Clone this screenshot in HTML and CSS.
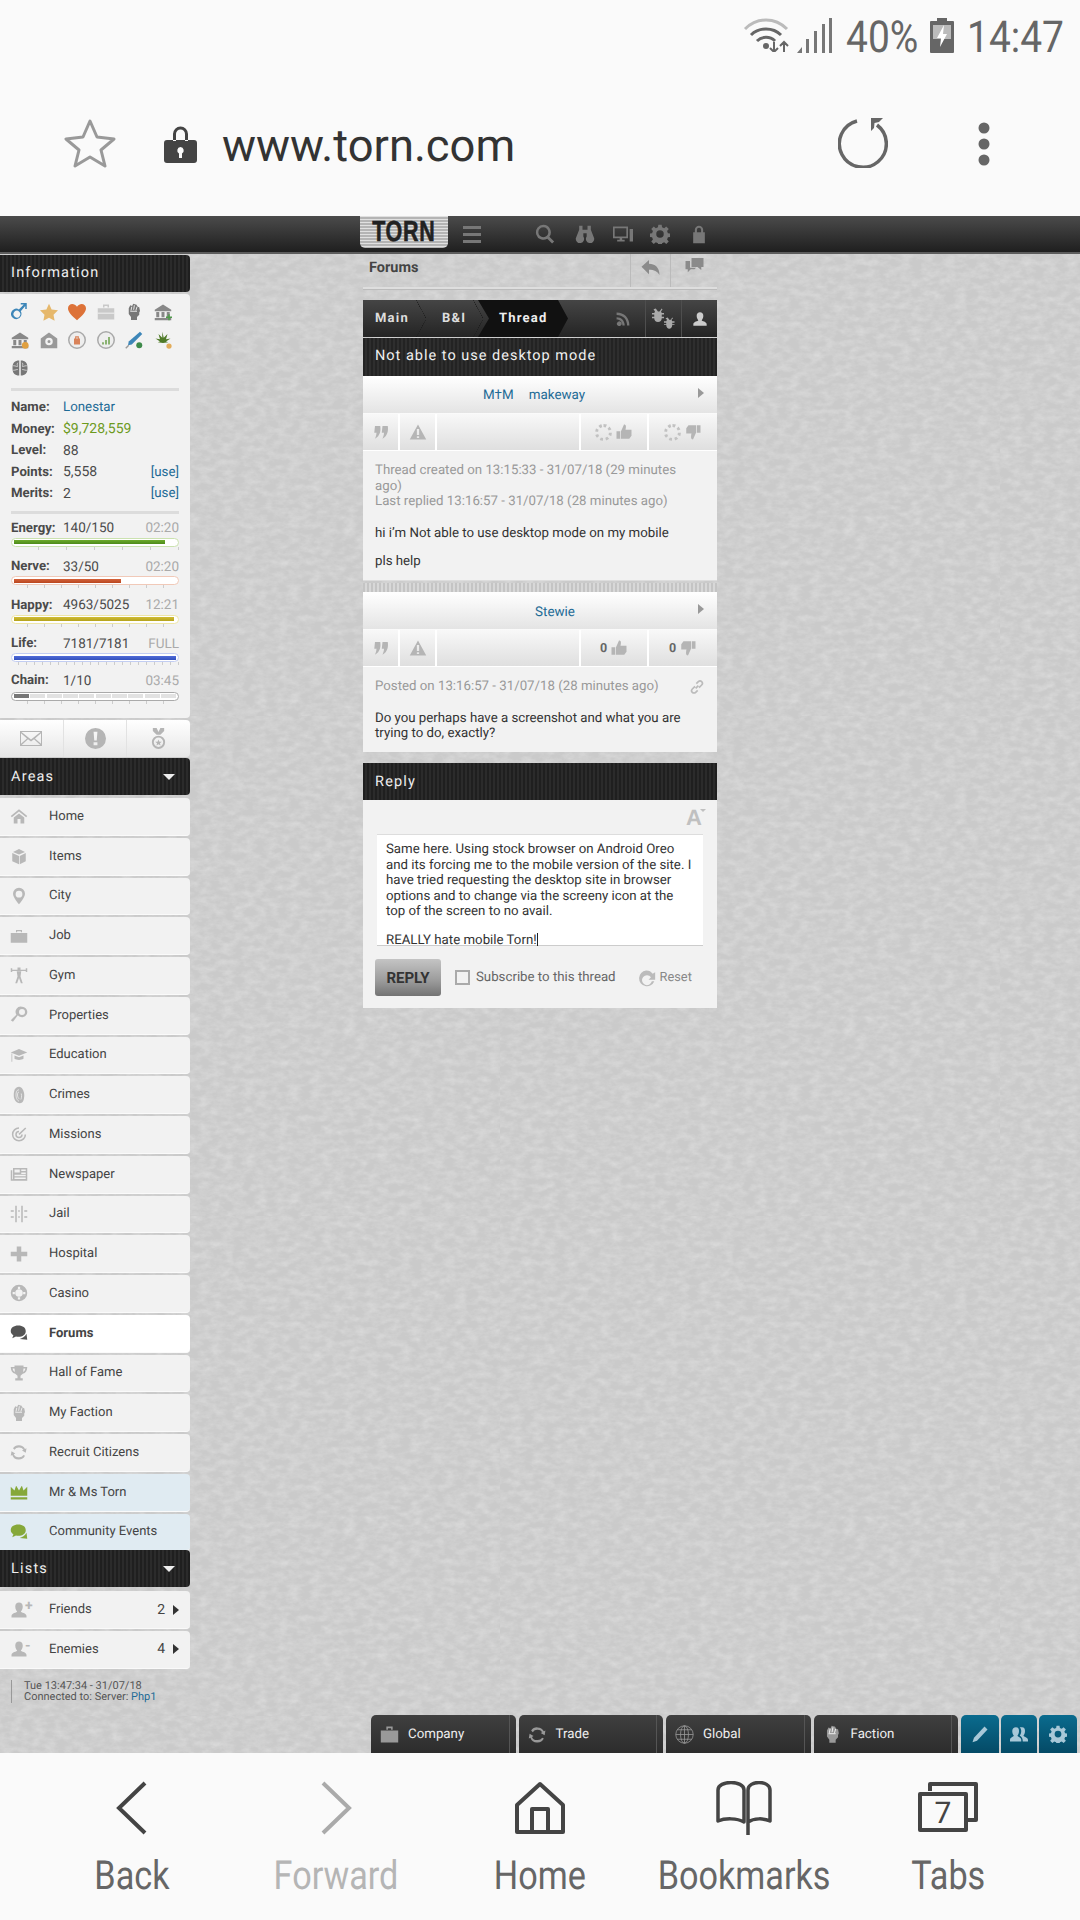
FILE: index.html
```html
<!DOCTYPE html>
<html lang="en">
  <head>
    <meta charset="UTF-8" />
    <title>TORN - Forums</title>
    <link rel="stylesheet" href="styles.css">
  </head>
  <body>
    <!-- shared icons -->
    <svg class="sprite" xmlns="http://www.w3.org/2000/svg">
      <symbol id="i-home" viewBox="0 0 24 24"><path d="M12 3 1 12l1.500 1.500L12 6l9.500 7.500L23 12zM5 14l7-5.500 7 5.500v8h-5v-6h-4v6H5z"/></symbol>
      <symbol id="i-box" viewBox="0 0 24 24"><path d="M12 12 3 8v11l9 4zM13 12v11l8-4V8zM12 10l8-3.500-8-4-8 4z"/></symbol>
      <symbol id="i-pin" viewBox="0 0 24 24"><path fill-rule="evenodd" d="M12 1a8 8 0 0 0-8 8c0 5 8 14 8 14s8-9 8-14a8 8 0 0 0-8-8zm0 4a4.500 4.500 0 1 1 0 9 4.500 4.500 0 0 1 0-9z"/></symbol>
      <symbol id="i-job" viewBox="0 0 24 24"><path d="M1 8h22v13H1zM8 7V4h8v3h-1.500V5.500h-5V7z"/></symbol>
      <symbol id="i-gym" viewBox="0 0 24 24"><path d="M1 3h2v5H1zM21 3h2v5h-2zM3 5h18v1.500H3zM10 2h4v3h-4zM9 7h6l-1 7 3 9h-2.500L12 16l-2.500 7H7l3-9z"/></symbol>
      <symbol id="i-key" viewBox="0 0 24 24"><path fill-rule="evenodd" d="M16 1a7 7 0 1 1-5.500 11.300L4 21l-3-2 7.500-7.500A7 7 0 0 1 16 1zm0 3a4 4 0 1 0 0 8 4 4 0 0 0 0-8z"/></symbol>
      <symbol id="i-edu" viewBox="0 0 24 24"><path d="M12 4 1 8.500 12 13l11-4.500zM6 12.500V17c3 2 9 2 12 0v-4.500l-6 2.500zM2 10h1v11H2z"/></symbol>
      <symbol id="i-crimes" viewBox="0 0 24 24"><path d="M12 1C7 1 5 6 5 12s3 11 8 11 6-6 6-11-3-11-7-11z"/><path fill="none" stroke="#f2f2f2" d="M12 5c-3 0-4 3-4 7s2 8 4 8M12 8c-1.500 0-2 2-2 4s1 5 2.500 5M15 10c1 4 0 7-.500 8"/></symbol>
      <symbol id="i-target" viewBox="0 0 24 24"><path fill="none" stroke="currentColor" stroke-width="2" d="M12 4a8.500 8.500 0 1 0 8.500 8.500M12 8.500a4 4 0 1 0 4 4M12 12.500 21 4"/></symbol>
      <symbol id="i-news" viewBox="0 0 24 24"><path fill-rule="evenodd" d="M4 4h19v17H1V7h2v12h1zm2 2v4h7V6zm9 0v2h6V6zm0 4v2h6v-2zM6 13v2h15v-2zm0 3.500v2h15v-2z"/></symbol>
      <symbol id="i-jail" viewBox="0 0 24 24"><path d="M7 1h2v22H7zM15 1h2v22h-2zM1 7h4v2H1zM11 7h2v2h-2zM19 7h4v2h-4zM1 15h4v2H1zM11 15h2v2h-2zM19 15h4v2h-4z"/></symbol>
      <symbol id="i-plus" viewBox="0 0 24 24"><path d="M9 2h6v7h8v6h-8v7H9v-7H1V9h8z"/></symbol>
      <symbol id="i-chip" viewBox="0 0 24 24"><path fill-rule="evenodd" d="M12 1a11 11 0 1 1 0 22 11 11 0 0 1 0-22zm0 6a5 5 0 1 0 0 10 5 5 0 0 0 0-10zM10.500 3.500v3h3v-3zm0 14v3h3v-3zm-7-7v3h3v-3zm14 0v3h3v-3z"/></symbol>
      <symbol id="i-chat" viewBox="0 0 24 24"><path d="M11 2c6 0 10 3 10 7.500S17 17 11 17c-1 0-2 0-3-.300L3 19l1.500-4C2.500 13.500 1 12 1 9.500 1 5 5 2 11 2zM22 13l1 8-10-1c3-1 7-3 9-7z"/></symbol>
      <symbol id="i-trophy" viewBox="0 0 24 24"><path d="M6 2h12v2h5c0 5-2 8-6 9-1 1-2 2-3 2.500V19h3v3H7v-3h3v-3.500C9 15 8 14 7 13c-4-1-6-4-6-9h5zM3.500 6c.300 2 1 3.500 3 4.500L6 6zM20.500 6H18l-.500 4.500c2-1 2.700-2.500 3-4.500z"/></symbol>
      <symbol id="i-fist" viewBox="0 0 24 24"><path d="M5 7l2-4 2.500 1L11 1l3 1 1 0 2 3 2 .500 1 5-1 2 0 3-3 3v4H8v-4l-3-4z"/><path fill="none" stroke="#f2f2f2" stroke-width="1.200" d="M9 5l-1 5M12.500 3l-1 6M16 5l-1.500 5M7 11l9 0"/></symbol>
      <symbol id="i-cycle" viewBox="0 0 24 24"><path d="M12 3a9 9 0 0 1 8 5l2-1-1 6-5-3 2-1a7 7 0 0 0-6-3 7 7 0 0 0-6 3L4 7a9 9 0 0 1 8-4zM2 11l5 3-2 1a7 7 0 0 0 7 4 7 7 0 0 0 6-3l2 1a9 9 0 0 1-8 5 9 9 0 0 1-9-6l-2 1z"/></symbol>
      <symbol id="i-crown" viewBox="0 0 24 24"><path d="M1 5l5 5 2-6h.500l3.500 6 3.500-6h.500l2 6 5-5v12H1zM1 19h22v3H1z"/></symbol>
      <symbol id="i-person" viewBox="0 0 24 24"><path d="M12 2c3 0 5 2 5 5.500S15 13 14.500 14c0 1.500 7.500 2 7.500 6v2H2v-2c0-4 7.500-4.500 7.500-6C9 13 7 11 7 7.500S9 2 12 2z"/></symbol>
      <symbol id="i-quote" viewBox="0 0 24 24"><path d="M4 4h7c1 6 0 13-7 17 1-3 2-5 2-8H3zM14 4h7c1 6 0 13-7 17 1-3 2-5 2-8h-3z"/></symbol>
      <symbol id="i-warn" viewBox="0 0 24 24"><path fill-rule="evenodd" d="M12 2l11 20H1zm-1.500 6v8h3V8zm0 9.500v2.500h3v-2.500z"/></symbol>
      <symbol id="i-up" viewBox="0 0 24 24"><path d="M2 11h5v10H2zM8 11l4-9c3 0 3 3 2 7h8v8l-3 4H8z"/></symbol>
      <symbol id="i-down" viewBox="0 0 24 24"><path d="M17 3h5v10h-5zM16 3H6L3 7v7h7c-1 4-1 8 2 8l4-9z"/></symbol>
      <symbol id="i-gear" viewBox="0 0 24 24"><path fill-rule="evenodd" d="M10 1h4l.500 3 2.500 1 2.500-2 3 3-2 2.500 1 2.500 3 .500v4l-3 .500-1 2.500 2 2.500-3 3-2.500-2-2.500 1-.500 3h-4l-.500-3-2.500-1-2.500 2-3-3 2-2.500-1-2.500-3-.500v-4l3-.500 1-2.500-2-2.500 3-3 2.500 2 2.500-1zm2 6.500a4.500 4.500 0 1 0 0 9 4.500 4.500 0 0 0 0-9z"/></symbol>
      <symbol id="i-padlock" viewBox="0 0 24 24"><path d="M7 10V7a5 5 0 0 1 10 0v3h2v13H5V10zm2.500 0h5V7a2.500 2.500 0 0 0-5 0z"/></symbol>
    </svg>

    <div class="status">
      <svg class="st-wifi" viewBox="0 0 48 34"><path d="M3 11C15-1 33-1 45 11" fill="none" stroke="#bbb" stroke-width="3"/><path d="M9 17c8-8 22-8 30 0M15 23c5-5 13-5 18 0" fill="none" stroke="#666" stroke-width="3"/><circle cx="24" cy="28" r="3" fill="#666"/><path d="M32 24v10M28 30l4 4 4-4M42 34V24M38 28l4-4 4 4" fill="none" stroke="#666" stroke-width="2"/></svg>
      <svg class="st-signal" viewBox="0 0 35 35"><path d="M0 35l5-6v6zM9 35V21h3v14zM17 35V13h3v22zM25 35V6h3v29zM32 35V0h3v35z" fill="#777"/></svg>
      <span class="st-pct">40%</span>
      <svg class="st-batt" viewBox="0 0 24 35"><path fill-rule="evenodd" d="M7 0h10v3h6a1 1 0 0 1 1 1v30a1 1 0 0 1-1 1H1a1 1 0 0 1-1-1V4a1 1 0 0 1 1-1h6z" fill="#666"/><path d="M3 7h18v14H3z" fill="#bbb"/><path d="M14 7 7 20h4l-1 9 7-13h-4z" fill="#fff"/></svg>
      <span class="st-time">14:47</span>
    </div>

    <div class="urlbar">
      <svg class="url-star" viewBox="0 0 52 50"><path d="M26 3l7 16 17 2-13 11 4 16-15-9-15 9 4-16L2 21l17-2z" fill="none" stroke="#999" stroke-width="3" stroke-linejoin="round"/></svg>
      <svg class="url-lock" viewBox="0 0 33 38"><path fill-rule="evenodd" d="M9 16V9a7.500 7.500 0 0 1 15 0v7h-3V9a4.500 4.500 0 0 0-9 0v7zM3 15h27a3 3 0 0 1 3 3v17a3 3 0 0 1-3 3H3a3 3 0 0 1-3-3V18a3 3 0 0 1 3-3zm13.500 7a3.500 3.500 0 0 0-1.500 6.500V33h3v-4.500A3.500 3.500 0 0 0 16.500 22z" fill="#444"/></svg>
      <span class="url-text">www.torn.com</span>
      <svg class="url-reload" viewBox="0 0 50 50"><path d="M19 3A23.500 23.500 0 1 0 39 7" fill="none" stroke="#666" stroke-width="3.500"/><path d="M33 0h12l-4 4-4.500 1-.500 5-3 3z" fill="#666"/></svg>
      <svg class="url-menu" viewBox="0 0 12 44"><circle cx="6" cy="6" r="5.500"/><circle cx="6" cy="22" r="5.500"/><circle cx="6" cy="38" r="5.500"/></svg>
    </div>

    <div class="page">
      <header class="topbar">
        <div class="logo"><span>TORN</span></div>
        <svg class="top-burger" viewBox="0 0 18 17"><path d="M0 0h18v3H0zM0 7h18v3H0zM0 14h18v3H0z"/></svg>
        <svg class="top-icon top-search" viewBox="0 0 24 24"><path fill-rule="evenodd" d="M10 1a9 9 0 0 1 7.200 14.400L23 21l-2.500 2.500-5.700-5.800A9 9 0 1 1 10 1zm0 3a6 6 0 1 0 0 12 6 6 0 0 0 0-12z"/></svg>
        <svg class="top-icon top-bino" viewBox="0 0 24 24"><path d="M5 2h4v5h6V2h4v5l4 10a5 5 0 1 1-9-2V11h-4v4a5 5 0 1 1-9 2L5 7z"/></svg>
        <svg class="top-icon top-mon" viewBox="0 0 24 24"><path fill-rule="evenodd" d="M0 3h18v14h-7v2h3v2H5v-2h3v-2H0zm2 2v10h14V5zM20 6h4v15h-4z"/></svg>
        <svg class="top-icon top-gear"><use href="#i-gear"/></svg>
        <svg class="top-icon top-lock"><use href="#i-padlock"/></svg>
      </header>

      <div class="layout">
        <aside class="sidebar">
          <h2 class="bar-title bar-info">Information</h2>
          <section class="info">
            <div class="status-icons">
              <svg class="si" viewBox="0 0 24 24"><path d="M13 11a7 7 0 1 1-2.500-2.500L17 2h-4V0h8v8h-2V4l-6 7zm-2 .500a4.500 4.500 0 1 0 .500 6 4.500 4.500 0 0 0-.500-6z" fill="#3d86b8"/></svg>
              <svg class="si" viewBox="0 0 24 24"><path d="M12 1l3.500 7.500L24 9.500l-6 6 1.500 8L12 19.500 4.500 23.500l1.500-8-6-6 8.500-1z" fill="#e6b86c"/></svg>
              <svg class="si" viewBox="0 0 24 24"><path d="M12 23C5 17 0 12 0 7c0-6 8-8 12-2 4-6 12-4 12 2 0 5-5 10-12 16z" fill="#dd7238"/></svg>
              <svg class="si" viewBox="0 0 24 24"><path d="M1 7h22v15H1zM8 6V2h8v4h-2V4h-4v2z" fill="#c9c9c9"/><path d="M1 13h22v1H1z" fill="#fff"/></svg>
              <svg class="si si-dark"><use href="#i-fist"/></svg>
              <svg class="si" viewBox="0 0 24 24"><path d="M12 2 1 9v2h22V9zM3 12h4v7H3zM10 12h4v7h-4zM17 12h4v7h-4zM1 20h22v3H1z" fill="#888"/><path d="M19 15h2v3h3v2h-3v3h-2v-3h-3v-2h3z" fill="#4f9a4a"/></svg>
              <svg class="si" viewBox="0 0 24 24"><path d="M12 2 1 9v2h22V9zM3 12h4v7H3zM10 12h4v7h-4zM17 12h4v7h-4zM1 20h22v3H1z" fill="#888"/><circle cx="19" cy="19" r="4.500" fill="#e0a040"/></svg>
              <svg class="si" viewBox="0 0 24 24"><path fill-rule="evenodd" d="M12 2 1 10v13h22V10zm0 7a5 5 0 1 1 0 10 5 5 0 0 1 0-10zm0 3a2 2 0 1 0 0 4 2 2 0 0 0 0-4z" fill="#999"/></svg>
              <svg class="si" viewBox="0 0 24 24"><circle cx="12" cy="12" r="11" fill="#eee" stroke="#aaa" stroke-width="2"/><path d="M8 10h8v8H8zM9.500 10V7h5v3h-1.500V8.500h-2V10z" fill="#d9835a"/></svg>
              <svg class="si" viewBox="0 0 24 24"><circle cx="12" cy="12" r="11" fill="#eee" stroke="#aaa" stroke-width="2"/><path d="M7 15h2v3H7zM11 12h2v6h-2zM15 8h2v10h-2z" fill="#6aa04a"/></svg>
              <svg class="si" viewBox="0 0 24 24"><path d="M20 1l3 3-14 14-5 1 1-5z" fill="#3d86b8"/><path d="M1 23l4-4" stroke="#999" stroke-width="2"/><circle cx="19" cy="19" r="4" fill="#3d8a4a"/></svg>
              <svg class="si" viewBox="0 0 24 24"><path d="M11 1l2 8 5-5-2 7 6-1-6 4 3 1-7 1-7-1 3-1-6-4 6 1-2-7 5 5z" fill="#4f7a28"/><circle cx="20" cy="20" r="3.500" fill="#e3ac5a"/></svg>
              <svg class="si" viewBox="0 0 24 24"><path fill="#777" d="M11 2v20C5 22 2 19 2 12S5 2 11 2zM13 2v20c6 0 9-3 9-10S19 2 13 2z"/><path fill="none" stroke="#eee" d="M3 9c3 0 4 1 6 1M9 5c-1 2-1 3 0 4M3 15c3 0 4-1 6-1M21 9c-3 0-4 1-6 1M15 5c1 2 1 3 0 4M21 15c-3 0-4-1-6-1"/></svg>
            </div>
            <div class="rule"></div>
            <div class="stats">
              <div class="stat"><b>Name:</b><a>Lonestar</a></div>
              <div class="stat"><b>Money:</b><span class="money">$9,728,559</span></div>
              <div class="stat"><b>Level:</b><span>88</span></div>
              <div class="stat"><b>Points:</b><span>5,558</span><a class="use">[use]</a></div>
              <div class="stat"><b>Merits:</b><span>2</span><a class="use">[use]</a></div>
            </div>
            <div class="rule rule-bars"></div>
            <div class="gauge">
              <div class="stat"><b>Energy:</b><span>140/150</span><i>02:20</i></div>
              <div class="meter meter-energy"><div class="fill" style="width: 93%"></div></div>
              <div class="ticks ticks-energy"></div>
            </div>
            <div class="gauge">
              <div class="stat"><b>Nerve:</b><span>33/50</span><i>02:20</i></div>
              <div class="meter meter-nerve"><div class="fill" style="width: 66%"></div></div>
              <div class="ticks"></div>
            </div>
            <div class="gauge">
              <div class="stat"><b>Happy:</b><span>4963/5025</span><i>12:21</i></div>
              <div class="meter meter-happy"><div class="fill" style="width: 99%"></div></div>
              <div class="ticks"></div>
            </div>
            <div class="gauge">
              <div class="stat"><b>Life:</b><span>7181/7181</span><i>FULL</i></div>
              <div class="meter meter-life"><div class="fill" style="width: 100%"></div></div>
              <div class="ticks ticks-life"></div>
            </div>
            <div class="gauge gauge-chain">
              <div class="stat"><b>Chain:</b><span>1/10</span><i>03:45</i></div>
              <div class="meter meter-chain">
                <div class="link on"></div><div class="link"></div><div class="link"></div><div class="link"></div><div class="link"></div>
                <div class="link"></div><div class="link"></div><div class="link"></div><div class="link"></div><div class="link"></div>
              </div>
              <div class="ticks"></div>
            </div>
          </section>

          <div class="msg-icons">
            <div class="msg-cell"><svg class="msg-mail" viewBox="0 0 22 15"><path fill-rule="evenodd" d="M0 0h22v15H0zm1.500 1L11 8.500 20.500 1zM1 2.200v10.600L7 7.500zm20 0L15 7.500l6 5.300zM8 8.300 1.700 14h18.600L14 8.300 11 10.500z"/></svg></div>
            <div class="msg-cell"><svg class="msg-alert" viewBox="0 0 22 22"><path fill-rule="evenodd" d="M11 0a11 11 0 1 1 0 22 11 11 0 0 1 0-22zM9 4l.700 9h2.600L13 4zm0 11v3h4v-3z"/></svg></div>
            <div class="msg-cell"><svg class="msg-medal" viewBox="0 0 18 22"><path d="M3 0h4l2 4 2-4h4v3l-4 4H7L3 3z"/><path fill-rule="evenodd" d="M9 8a7 7 0 1 1 0 14A7 7 0 0 1 9 8zm0 2a5 5 0 1 0 0 10 5 5 0 0 0 0-10zm0 2 1 2.500h2.500l-2 1.500.700 2.500L9 17l-2.200 1.500.700-2.500-2-1.500H8z"/></svg></div>
          </div>

          <h2 class="bar-title bar-drop">Areas</h2>
          <nav class="areas">
            <a class="area"><svg class="area-icon"><use href="#i-home"/></svg>Home</a>
            <a class="area"><svg class="area-icon"><use href="#i-box"/></svg>Items</a>
            <a class="area"><svg class="area-icon"><use href="#i-pin"/></svg>City</a>
            <a class="area"><svg class="area-icon"><use href="#i-job"/></svg>Job</a>
            <a class="area"><svg class="area-icon"><use href="#i-gym"/></svg>Gym</a>
            <a class="area"><svg class="area-icon"><use href="#i-key"/></svg>Properties</a>
            <a class="area"><svg class="area-icon"><use href="#i-edu"/></svg>Education</a>
            <a class="area"><svg class="area-icon"><use href="#i-crimes"/></svg>Crimes</a>
            <a class="area"><svg class="area-icon"><use href="#i-target"/></svg>Missions</a>
            <a class="area"><svg class="area-icon"><use href="#i-news"/></svg>Newspaper</a>
            <a class="area"><svg class="area-icon"><use href="#i-jail"/></svg>Jail</a>
            <a class="area"><svg class="area-icon"><use href="#i-plus"/></svg>Hospital</a>
            <a class="area"><svg class="area-icon"><use href="#i-chip"/></svg>Casino</a>
            <a class="area active"><svg class="area-icon"><use href="#i-chat"/></svg>Forums</a>
            <a class="area"><svg class="area-icon"><use href="#i-trophy"/></svg>Hall of Fame</a>
            <a class="area"><svg class="area-icon"><use href="#i-fist"/></svg>My Faction</a>
            <a class="area"><svg class="area-icon"><use href="#i-cycle"/></svg>Recruit Citizens</a>
            <a class="area event"><svg class="area-icon"><use href="#i-crown"/></svg>Mr &amp; Ms Torn</a>
            <a class="area event"><svg class="area-icon"><use href="#i-chat"/></svg>Community Events</a>
          </nav>

          <h2 class="bar-title bar-drop bar-lists">Lists</h2>
          <nav class="lists">
            <a class="area"><svg class="area-icon"><use href="#i-person"/></svg><sup class="sign">+</sup>Friends<span class="count">2</span><em class="tri"></em></a>
            <a class="area"><svg class="area-icon"><use href="#i-person"/></svg><sup class="sign">-</sup>Enemies<span class="count">4</span><em class="tri"></em></a>
          </nav>

          <div class="server">
            <div>Tue 13:47:34 - 31/07/18</div>
            <div>Connected to: Server: <a>Php1</a></div>
          </div>
        </aside>

        <main class="forum">
          <div class="forum-head">
            <h1>Forums</h1>
            <div class="head-btn">
              <svg class="head-reply" viewBox="0 0 24 20"><path d="M10 0v5c8 0 14 5 14 15-3-5-7-7-14-7v6L0 9z"/></svg>
            </div>
            <div class="head-btn">
              <svg class="head-chat" viewBox="0 0 24 20"><path d="M8 0h16v12h-3v4l-5-4H8zM6 4v9h8l-2 2H7l-4 4v-4H0V4z"/></svg>
            </div>
          </div>

          <div class="crumbs">
            <span class="crumb">Main</span>
            <span class="crumb">B&amp;I</span>
            <span class="crumb crumb-now">Thread</span>
            <div class="crumb-tools">
              <svg class="tool-rss" viewBox="0 0 24 24"><path d="M3 17a4 4 0 1 1 0 6 4 4 0 0 1 0-6zM1 9c8 0 14 6 14 14h-4C11 17 7 13 1 13zM1 1c13 0 22 9 22 22h-4C19 12 12 5 1 5z"/></svg>
              <div class="tool-cell tool-bugs">
                <svg viewBox="0 0 32 28"><path d="M5 0l3 4h2l3-4 1 1-2 3 1 2h3v2h-3v3h3v2h-3c0 3-2 5-5 5s-5-2-5-5H0v-2h3V8H0V6h3l1-2-2-3zM21 12l2 3h2l2-3 1 1-2 2 1 2h3v2h-3v2h3v1h-3c0 3-2 5-4 5s-4-2-4-5h-3v-1h3v-2h-3v-2h3l1-2-2-2z"/></svg>
              </div>
              <div class="tool-cell"><svg class="tool-person"><use href="#i-person"/></svg></div>
            </div>
          </div>
          <h2 class="thread-title">Not able to use desktop mode</h2>

          <div class="poster"><span class="poster-name poster-op"><a>M†M</a><a>makeway</a></span><em class="poster-arrow"></em></div>
          <div class="actions">
            <div class="act act-s"><svg class="act-icon"><use href="#i-quote"/></svg></div>
            <div class="act act-s"><svg class="act-icon"><use href="#i-warn"/></svg></div>
            <div class="act act-fill"></div>
            <div class="act act-vote"><span class="spin"></span><svg class="act-icon"><use href="#i-up"/></svg></div>
            <div class="act act-vote"><span class="spin"></span><svg class="act-icon"><use href="#i-down"/></svg></div>
          </div>
          <article class="post post-first">
            <p class="meta">Thread created on 13:15:33 - 31/07/18 (29 minutes ago)<br>Last replied 13:16:57 - 31/07/18 (28 minutes ago)</p>
            <p class="body">hi i’m Not able to use desktop mode on my mobile</p>
            <p class="body body-next">pls help</p>
          </article>
          <div class="divider"></div>

          <div class="poster"><span class="poster-name poster-reply"><a>Stewie</a></span><em class="poster-arrow"></em></div>
          <div class="actions">
            <div class="act act-s"><svg class="act-icon"><use href="#i-quote"/></svg></div>
            <div class="act act-s"><svg class="act-icon"><use href="#i-warn"/></svg></div>
            <div class="act act-fill"></div>
            <div class="act act-vote"><b>0</b><svg class="act-icon"><use href="#i-up"/></svg></div>
            <div class="act act-vote"><b>0</b><svg class="act-icon"><use href="#i-down"/></svg></div>
          </div>
          <article class="post post-second">
            <div class="meta-row">
              <p class="meta">Posted on 13:16:57 - 31/07/18 (28 minutes ago)</p>
              <svg class="link-icon" viewBox="0 0 24 24"><path d="M10 14 14 10M9 11l-4 4a3.500 3.500 0 0 0 5 5l3-3M15 13l4-4a3.500 3.500 0 0 0-5-5l-3 3" fill="none" stroke="#bbb" stroke-width="2.500"/></svg>
            </div>
            <p class="body body-reply">Do you perhaps have a screenshot and what you are trying to do, exactly?</p>
          </article>

          <h2 class="reply-title">Reply</h2>
          <section class="reply">
            <div class="reply-tools"><span class="font-a">A</span></div>
            <div class="editor">
              <p>Same here. Using stock browser on Android Oreo and its forcing me to the mobile version of the site. I have tried requesting the desktop site in browser options and to change via the screeny icon at the top of the screen to no avail.</p>
              <p class="editor-last">REALLY hate mobile Torn!<span class="caret"></span></p>
            </div>
            <div class="reply-row">
              <button class="reply-btn">REPLY</button>
              <span class="check"></span>
              <span class="sub-label">Subscribe to this thread</span>
              <svg class="reset-icon" viewBox="0 0 24 24"><path d="M12 3a9 9 0 0 1 8 4l3-2v9h-8l3-3a6 6 0 1 0 1 5h3A9.500 9.500 0 1 1 12 3z"/></svg>
              <span class="reset">Reset</span>
            </div>
          </section>
        </main>
      </div>

      <!-- chat tabs sit over the page, docked on its bottom edge -->
      <div class="chats">
        <div class="chat"><svg class="chat-icon" viewBox="0 0 24 24"><path d="M1 7h22v15H1zM8 6V2h8v4h-2V4h-4v2z"/></svg>Company</div>
        <div class="chat"><svg class="chat-icon"><use href="#i-cycle"/></svg>Trade</div>
        <div class="chat"><svg class="chat-icon" viewBox="0 0 24 24"><g fill="none" stroke="currentColor"><circle cx="12" cy="12" r="11"/><ellipse cx="12" cy="12" rx="5" ry="11"/><path d="M1 12h22M3 6h18M3 18h18M12 1v22"/></g></svg>Global</div>
        <div class="chat"><svg class="chat-icon"><use href="#i-fist"/></svg>Faction</div>
        <div class="chat-btn"><svg viewBox="0 0 24 24"><path d="M18 2l4 4L8 21l-6 2 2-6z"/></svg></div>
        <div class="chat-btn chat-btn-mid"><svg viewBox="0 0 24 24"><path d="M8 3c3 0 4 2 4 5s-1 5-2 6c0 2 5 2 5 6v2H0v-2c0-4 5-4 5-6-1-1-2-3-2-6s2-5 5-5zM16 3c3 0 4 2 4 5s-1 5-2 6c0 2 6 2 6 6v2h-7c0-4-1-6-4-8 1-1 2-3 2-6 0-2-1-4-2-5z"/></svg></div>
        <div class="chat-btn chat-btn-end"><svg><use href="#i-gear"/></svg></div>
      </div>
    </div>

    <nav class="bottom">
      <a class="tab"><svg class="tab-icon" viewBox="0 0 60 54"><path d="M43 2 17 27l26 25" fill="none" stroke="#444" stroke-width="4"/></svg><span>Back</span></a>
      <a class="tab tab-off"><svg class="tab-icon" viewBox="0 0 60 54"><path d="M17 2l26 25-26 25" fill="none" stroke="#aaa" stroke-width="4"/></svg><span>Forward</span></a>
      <a class="tab"><svg class="tab-icon" viewBox="0 0 60 54"><path d="M30 3 7 24v27h46V24zM22 51V28h16v23" fill="none" stroke="#444" stroke-width="4" stroke-linejoin="round"/></svg><span>Home</span></a>
      <a class="tab"><svg class="tab-icon" viewBox="0 0 60 54"><path d="M4 40V9c0-10 26-10 26 0v32c-7-4-19-4-26-1zM56 40V9c0-10-22-10-22 0v32c6-4 16-4 22-1zM34 41v13" fill="none" stroke="#444" stroke-width="3.500" stroke-linejoin="round"/></svg><span>Bookmarks</span></a>
      <a class="tab"><svg class="tab-icon" viewBox="0 0 60 54"><path d="M12 10V3h46v36h-8" fill="none" stroke="#444" stroke-width="4" stroke-linejoin="round"/><path d="M2 13h46v36H2z" fill="#fafafa" stroke="#444" stroke-width="4" stroke-linejoin="round"/><text class="tab-count" x="25" y="42" text-anchor="middle">7</text></svg><span>Tabs</span></a>
    </nav>
  </body>
</html>
```
FILE: styles.css
```css
*,
*::before,
*::after {
  box-sizing: border-box;
}
html,
body {
  margin: 0;
  padding: 0;
}
body {
  width: 1080px;
  height: 1920px;
  overflow: hidden;
  background: #fafafa;
  font-family: Roboto, "Liberation Sans", sans-serif;
  color: #444;
  text-rendering: geometricPrecision;
}
h1,
h2,
p {
  margin: 0;
  font-weight: normal;
}
a {
  color: #1e6b96;
  text-decoration: none;
}
.sprite {
  position: absolute;
  width: 0;
  height: 0;
}

/* phone status bar */
.status {
  height: 70px;
  display: flex;
  align-items: flex-start;
  padding-top: 18px;
  padding-left: 742px;
  color: #666;
}
.st-wifi {
  width: 48px;
  height: 34px;
}
.st-signal {
  width: 35px;
  height: 35px;
  margin-left: 7px;
}
.st-pct,
.st-time {
  font-size: 44px;
  line-height: 38px;
  transform-origin: left center;
  transform: scaleX(0.885);
}
.st-pct {
  width: 71px;
  margin-left: 14px;
}
.st-batt {
  width: 24px;
  height: 35px;
  margin-left: 13px;
}
.st-time {
  margin-left: 13px;
}

/* browser url bar */
.urlbar {
  height: 146px;
  display: flex;
  align-items: flex-start;
  padding-left: 64px;
}
.url-star {
  width: 52px;
  height: 50px;
  margin-top: 48px;
}
.url-lock {
  width: 33px;
  height: 38px;
  margin-top: 55px;
  margin-left: 48px;
}
.url-text {
  width: 616px;
  margin-left: 25px;
  margin-top: 51px;
  font-size: 45.300px;
  line-height: 52px;
  color: #333;
}
.url-reload {
  width: 50px;
  height: 50px;
  margin-top: 48px;
}
.url-menu {
  width: 12px;
  height: 44px;
  margin-left: 90px;
  margin-top: 52px;
  fill: #666;
}

/* the site itself */
.page {
  position: relative;
  height: 1537px;
  overflow: hidden;
  background-color: #cacaca;
  background-image: url("data:image/svg+xml,%3Csvg xmlns='http://www.w3.org/2000/svg' width='500' height='500'%3E%3Cfilter id='n'%3E%3CfeTurbulence type='fractalNoise' baseFrequency='.09 .16' numOctaves='4'/%3E%3CfeColorMatrix values='0 0 0 0 1 0 0 0 0 1 0 0 0 0 1 0 0 0 .5 -.17'/%3E%3C/filter%3E%3Crect width='500' height='500' filter='url(%23n)'/%3E%3C/svg%3E");
}
.topbar {
  height: 38px;
  display: flex;
  align-items: center;
  padding-left: 360px;
  background: linear-gradient(#4b4b4b, #1f1f1f);
  border-bottom: 2px solid #5c5c5c;
}
.logo {
  width: 88px;
  height: 32px;
  align-self: flex-start;
  display: flex;
  align-items: center;
  justify-content: center;
  background: repeating-linear-gradient(#e0e0e0 0 1px, #b4b4b4 1px 3px);
  border-radius: 0 0 5px 5px;
}
.logo span {
  font-family: "Liberation Sans", sans-serif;
  font-weight: bold;
  font-size: 29px;
  line-height: 30px;
  letter-spacing: 1px;
  color: #222;
  -webkit-text-stroke: 0.6px #222;
  transform: scaleX(0.74);
}
.top-burger {
  width: 18px;
  height: 17px;
  margin-left: 15px;
  fill: #777;
}
.top-icon {
  width: 20px;
  height: 20px;
  fill: #777;
}
.top-search {
  margin-left: 54px;
}
.top-bino {
  margin-left: 20px;
}
.top-mon {
  margin-left: 18px;
}
.top-gear {
  margin-left: 17px;
}
.top-lock {
  margin-left: 19px;
}

.layout {
  display: flex;
  align-items: flex-start;
}
.sidebar {
  width: 190px;
  margin-top: 1px;
  flex: none;
}
.bar-title {
  position: relative;
  height: 37px;
  padding-left: 11px;
  font-size: 14.500px;
  line-height: 37px;
  letter-spacing: 1.200px;
  color: #eee;
  background: repeating-linear-gradient(90deg, #1f1f1f 0 2px, #2b2b2b 2px 4px);
  border-radius: 0 4px 4px 0;
}
.bar-info {
  line-height: 35px;
}
.bar-drop::after {
  content: "";
  position: absolute;
  right: 15px;
  top: 16px;
  border-left: 6px solid transparent;
  border-right: 6px solid transparent;
  border-top: 6px solid #eee;
}

.info {
  height: 424px;
  margin-top: 2px;
  padding: 4px 11px 0;
  background: #f2f2f2;
  border-radius: 0 4px 4px 0;
}
.status-icons {
  display: grid;
  grid-template-columns: repeat(6, 28.500px);
  grid-auto-rows: 28px;
  align-items: center;
}
.si {
  width: 18px;
  height: 18px;
  fill: #777;
}
.rule {
  height: 3px;
  margin-top: 6px;
  background: #dcdcdc;
}
.rule-bars {
  margin-top: 6px;
}
.stats {
  margin-top: 6px;
}
.stat {
  display: flex;
  height: 21.500px;
  align-items: center;
  font-size: 14px;
  color: #4a4a4a;
}
.stat b {
  width: 52px;
  font-size: 13.200px;
  flex: none;
}
.stat a {
  font-size: 13.300px;
}
.stat .money {
  color: #6d9a1e;
}
.stat .use {
  margin-left: auto;
  font-size: 13.300px;
}
.stat i {
  margin-left: auto;
  font-style: normal;
  color: #aaa;
}
.gauge {
  height: 38.500px;
}
.rule-bars + .gauge {
  margin-top: 5px;
}
.gauge-chain .stat {
  margin-top: -1.500px;
  margin-bottom: 1.500px;
}
.gauge .stat {
  height: 19px;
  font-size: 13.500px;
}
.meter {
  height: 9px;
  padding: 1.500px 2px;
  background: #fff;
  border: 1px solid #dfdfdf;
  border-radius: 5px;
}
.fill {
  height: 100%;
}
.meter-energy .fill {
  background: linear-gradient(#6cab2c, #4d8a1a);
}
.meter-energy {
  border-color: #cbe2b0;
}
.meter-nerve .fill {
  background: linear-gradient(#d4623a, #b9461f);
}
.meter-nerve {
  border-color: #f1c9b8;
}
.meter-happy .fill {
  background: linear-gradient(#d0bc36, #b5a31c);
}
.meter-happy {
  border-color: #eee6a8;
}
.meter-life .fill {
  background: linear-gradient(#4f6bd8, #3350bd);
}
.meter-life {
  border-color: #c2cdf2;
}
.meter-chain {
  display: flex;
  gap: 1.500px;
  border-color: #aaa;
}
.link {
  flex: 1;
  background: #e2e2e2;
}
.link.on {
  background: #777;
}
.ticks {
  height: 3px;
  background: repeating-linear-gradient(90deg, transparent 0 16px, #ccc 16px 17px);
}
.ticks-energy {
  background: repeating-linear-gradient(90deg, transparent 0 27px, #ccc 27px 28px);
}
.ticks-life {
  background: repeating-linear-gradient(90deg, transparent 0 7px, #ccc 7px 8px);
}

.msg-icons {
  display: flex;
  height: 37px;
  margin-top: 2px;
  margin-bottom: 1px;
  background: linear-gradient(#fff, #e6e6e6);
  border-radius: 0 4px 4px 0;
}
.msg-cell {
  flex: 1;
  display: flex;
  align-items: center;
  justify-content: center;
  fill: #b5b5b5;
}
.msg-cell + .msg-cell {
  border-left: 1px solid #e2e2e2;
}
.msg-mail {
  width: 22px;
  height: 15px;
}
.msg-alert {
  width: 21px;
  height: 21px;
}
.msg-medal {
  width: 17px;
  height: 21px;
}

.areas {
  display: flex;
  flex-direction: column;
  gap: 2px;
  margin-top: 3px;
}
.area {
  position: relative;
  height: 37.750px;
  display: flex;
  align-items: center;
  padding-left: 10px;
  padding-right: 11px;
  font-size: 13px;
  color: #444;
  background: #f2f2f2;
  border-bottom: 1px solid #fafafa;
  border-radius: 0 4px 4px 0;
}
.area-icon {
  width: 18px;
  height: 18px;
  margin-right: 21px;
  fill: #b8b8b8;
  color: #b8b8b8;
  flex: none;
}
.area.active {
  background: #fff;
  font-weight: bold;
}
.area.active .area-icon {
  fill: #555;
}
.area.event {
  background: #e0ebf2;
}
.area.event .area-icon {
  fill: #86a83a;
}
.bar-lists {
  margin-top: -1px;
}
.lists {
  display: flex;
  flex-direction: column;
  gap: 2px;
  margin-top: 4px;
}
.sign {
  position: absolute;
  left: 25px;
  top: 8px;
  font-size: 14px;
  line-height: 14px;
  font-weight: bold;
  color: #b8b8b8;
}
.count {
  margin-left: auto;
  margin-right: 8px;
  font-size: 14px;
}
.tri {
  border-top: 5px solid transparent;
  border-bottom: 5px solid transparent;
  border-left: 6px solid #333;
}
.server {
  margin-top: 11px;
  margin-left: 11px;
  padding-left: 12px;
  font-size: 11px;
  line-height: 11.500px;
  color: #555;
  border-left: 1px solid #999;
}

/* thread column */
.forum {
  width: 354px;
  margin-left: 173px;
  flex: none;
}
.forum-head {
  display: flex;
  height: 35px;
  border-bottom: 2px solid #dedede;
  box-shadow: 0 1px 0 #bbb;
}
.forum-head h1 {
  flex: 1;
  padding-left: 6px;
  font-size: 14.500px;
  font-weight: bold;
  line-height: 28px;
  color: #444;
}
.head-btn {
  width: 40px;
  display: flex;
  justify-content: center;
  padding-top: 4px;
  border-left: 1px solid #bbb;
  fill: #8a8a8a;
}
.head-btn:last-child {
  width: 47px;
}
.head-reply {
  width: 19px;
  height: 15px;
  margin-top: 2px;
}
.head-chat {
  width: 19px;
  height: 15px;
}

.crumbs {
  display: flex;
  align-items: center;
  height: 37px;
  margin-top: 11px;
  padding-left: 12px;
  background: linear-gradient(#454545, #242424);
}
.crumb {
  position: relative;
  width: 67px;
  font-size: 13px;
  font-weight: bold;
  letter-spacing: 1.200px;
  line-height: 37px;
  color: #ddd;
}
.crumb::after {
  content: "";
  position: absolute;
  right: 16px;
  top: 0;
  width: 10px;
  height: 37px;
  background: linear-gradient(to top right, transparent 49%, #1c1c1c 50%, transparent 54%) top / 100% 50% no-repeat,
    linear-gradient(to bottom right, transparent 49%, #1c1c1c 50%, transparent 54%) bottom / 100% 50% no-repeat;
}
.crumb:nth-child(2) {
  width: 57px;
}
.crumb-now {
  width: 90px;
  margin-left: -21px;
  padding-left: 21px;
  background: #111;
  color: #eee;
  clip-path: polygon(0 0, 80px 0, 90px 50%, 80px 100%, 0 100%, 11px 50%);
}
.crumb-now::after {
  display: none;
}
.crumb-tools {
  display: flex;
  align-items: center;
  height: 37px;
  margin-left: auto;
  fill: #777;
}
.tool-rss {
  width: 14px;
  height: 14px;
  margin-right: 15px;
}
.tool-cell {
  width: 36px;
  height: 37px;
  display: flex;
  align-items: center;
  justify-content: center;
  border-left: 1px solid #4e4e4e;
}
.tool-bugs svg {
  width: 24px;
  height: 22px;
  fill: #aaa;
}
.tool-person {
  width: 16px;
  height: 16px;
  fill: #ccc;
}
.thread-title {
  height: 38px;
  margin-top: 1px;
  padding-left: 12px;
  font-size: 14.500px;
  line-height: 36px;
  letter-spacing: 1px;
  color: #f0f0f0;
  background: repeating-linear-gradient(90deg, #232323 0 2px, #2e2e2e 2px 4px);
}
.poster {
  position: relative;
  height: 37px;
  display: flex;
  align-items: center;
  justify-content: center;
  font-size: 13.400px;
  background: linear-gradient(#fff, #e4e4e4);
}
.poster-name {
  display: flex;
  gap: 15px;
  padding-top: 1px;
}
.poster-op {
  padding-right: 12px;
}
.poster-reply {
  padding-left: 30px;
  padding-top: 3px;
}
.poster-arrow {
  position: absolute;
  right: 13px;
  top: 12px;
  border-top: 5px solid transparent;
  border-bottom: 5px solid transparent;
  border-left: 6px solid #999;
}
.actions {
  display: flex;
  height: 38px;
  border-top: 1px solid #fafafa;
  border-bottom: 1px solid #fff;
}
.act {
  display: flex;
  align-items: center;
  justify-content: center;
  gap: 3px;
  background: linear-gradient(#f8f8f8, #dfdfdf);
  border-right: 2px solid #fff;
  fill: #b5b5b5;
}
.act:last-child {
  border-right: 0;
}
.act-s {
  width: 37px;
}
.act-fill {
  flex: 1;
}
.act-vote {
  width: 68px;
  font-size: 12.500px;
  color: #666;
}
.act-icon {
  width: 18px;
  height: 18px;
}
.spin {
  width: 17px;
  height: 17px;
  border: 3px dotted #c2c2c2;
  border-radius: 50%;
}
.post {
  padding: 0 12px;
  background: #f2f2f2;
  font-size: 13.250px;
  line-height: 15.500px;
}
.post-first {
  height: 130px;
  padding-top: 12px;
  padding-right: 14px;
  border-bottom: 1px solid #ddd;
}
.post-second {
  height: 85px;
  padding-top: 12px;
}
.meta {
  color: #999;
}
.body {
  margin-top: 16px;
  color: #333;
}
.body-next {
  margin-top: 13px;
}
.body-reply {
  margin-top: 16px;
  line-height: 15px;
}
.meta-row {
  display: flex;
  justify-content: space-between;
  align-items: center;
}
.link-icon {
  width: 16px;
  height: 16px;
}
.divider {
  height: 9px;
  margin-top: 2px;
  background: repeating-linear-gradient(90deg, #c4c4c4 0 2px, #d8d8d8 2px 4px);
}
.reply-title {
  height: 37px;
  margin-top: 11px;
  padding-left: 12px;
  font-size: 14.500px;
  line-height: 37px;
  letter-spacing: 1.200px;
  color: #eee;
  background: repeating-linear-gradient(90deg, #1f1f1f 0 2px, #2b2b2b 2px 4px);
}
.reply {
  height: 208px;
  padding: 0 14px;
  background: #f2f2f2;
}
.reply-tools {
  height: 34px;
  display: flex;
  justify-content: flex-end;
  align-items: center;
}
.font-a {
  position: relative;
  padding-right: 1px;
  font-family: "Liberation Sans", sans-serif;
  font-size: 22px;
  line-height: 21px;
  font-weight: bold;
  color: #c0c0c0;
}
.font-a::after {
  content: "";
  position: absolute;
  right: -3px;
  top: 2px;
  border-left: 3px solid transparent;
  border-right: 3px solid transparent;
  border-top: 3px solid #c0c0c0;
}
.editor {
  height: 112px;
  padding: 7px 9px 0;
  font-size: 13.250px;
  line-height: 15.500px;
  color: #333;
  background: #fff;
  border-top: 1px solid #ddd;
  border-bottom: 1px solid #ccc;
}
.editor-last {
  margin-top: 13px;
  line-height: 14px;
}
.caret {
  display: inline-block;
  width: 1px;
  height: 13px;
  vertical-align: -2px;
  background: #222;
}
.reply-row {
  display: flex;
  align-items: center;
  height: 37px;
  margin-top: 13px;
  margin-left: -2px;
}
.reply-btn {
  width: 66px;
  height: 37px;
  padding: 0;
  border: 0;
  font-family: Roboto, sans-serif;
  font-size: 15px;
  font-weight: bold;
  color: #333;
  background: linear-gradient(#c4c4c4, #9a9a9a 60%, #737373);
  border-radius: 3px;
}
.check {
  width: 15px;
  height: 15px;
  margin-left: 14px;
  border: 2px solid #aaa;
}
.sub-label {
  margin-left: 6px;
  font-size: 13.250px;
  color: #666;
}
.reset-icon {
  width: 20px;
  height: 20px;
  margin-left: 20px;
  fill: #bbb;
}
.reset {
  margin-left: 4px;
  font-size: 12.800px;
  color: #888;
}

/* chat tabs, docked over the bottom of the page */
.chats {
  position: absolute;
  left: 371px;
  right: 0;
  bottom: 0;
  height: 38px;
  display: flex;
  gap: 3px;
}
.chat {
  position: relative;
  width: 144.500px;
  display: flex;
  align-items: center;
  padding-left: 9px;
  font-size: 13.300px;
  color: #eee;
  background: linear-gradient(#3f3f3f, #2c2c2c);
  border-radius: 5px 5px 0 0;
}
.chat::after {
  content: "";
  position: absolute;
  right: 6px;
  top: 0;
  bottom: 0;
  width: 1px;
  background: #555;
}
.chat-icon {
  width: 19px;
  height: 19px;
  margin-right: 9px;
  fill: #999;
  color: #999;
}
.chat-btn {
  width: 38px;
  display: flex;
  align-items: center;
  justify-content: center;
  fill: #a8c8d8;
  background: linear-gradient(#0a6b8e, #044a66);
  border-radius: 5px 5px 0 0;
}
.chat-btn svg {
  width: 18px;
  height: 18px;
}
.chat-btn-mid {
  width: 36px;
  margin-left: -1px;
}
.chat-btn-end {
  margin-left: -1px;
}

/* browser bottom bar */
.bottom {
  height: 167px;
  display: grid;
  grid-template-columns: repeat(5, 204px);
  padding: 28px 30px 0;
  background: #fafafa;
}
.tab {
  display: flex;
  flex-direction: column;
  align-items: center;
  font-size: 40px;
  color: #666;
}
.tab-off {
  color: #b5b5b5;
}
.tab-icon {
  width: 60px;
  height: 54px;
}
.tab-count {
  font-family: Roboto, sans-serif;
  font-size: 30px;
  fill: #444;
}
.tab span {
  margin-top: 18px;
  line-height: 46px;
  white-space: nowrap;
  transform: scaleX(0.855);
}
```
